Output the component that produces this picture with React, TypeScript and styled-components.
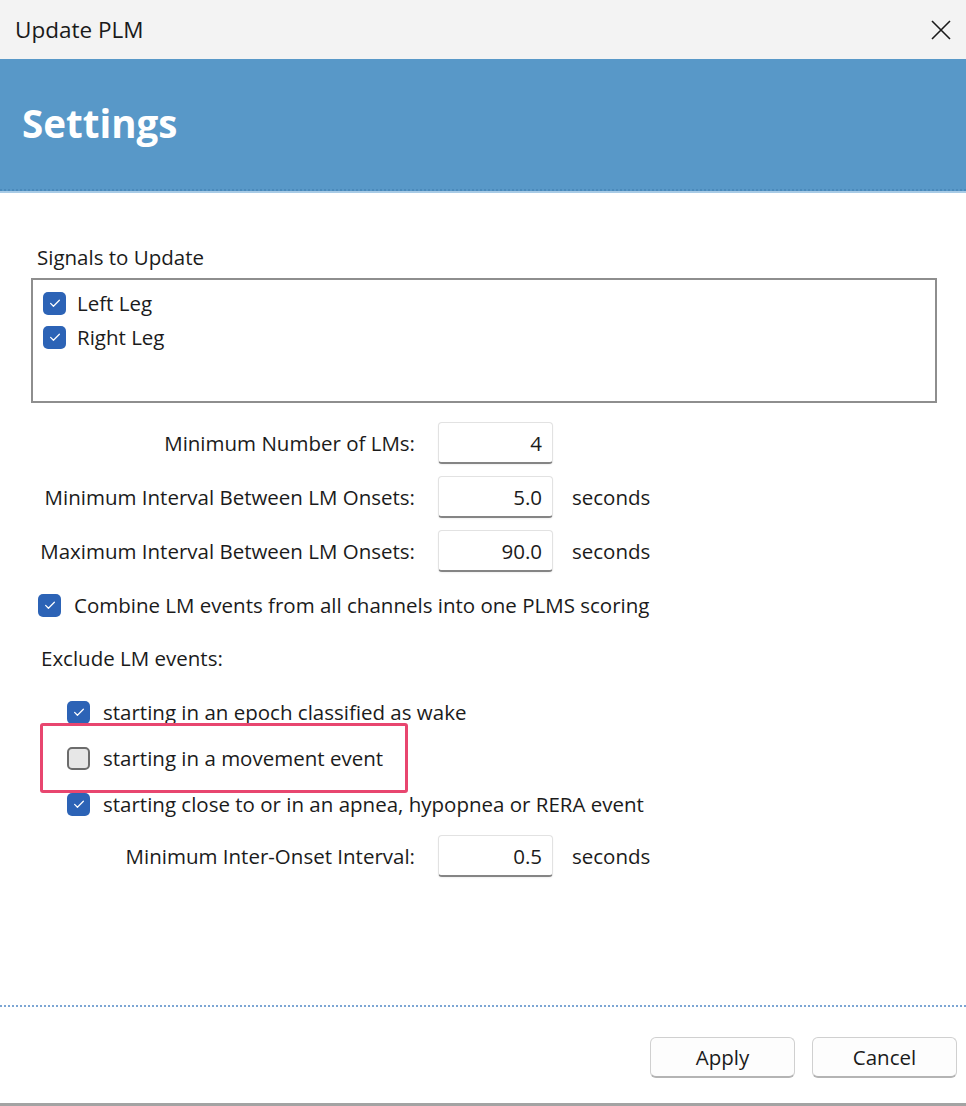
import React from "react";
import styled, { createGlobalStyle } from "styled-components";

const Global = createGlobalStyle`
  html, body { margin: 0; padding: 0; background: #ffffff; }
  body { font-family: "Open Sans", "Noto Sans", "Liberation Sans", sans-serif; color: #1b1b1b; }
  * { box-sizing: border-box; }
`;

const Window = styled.div`
  width: 966px;
  height: 1106px;
  display: flex;
  flex-direction: column;
  background: #ffffff;
  overflow: hidden;
`;

const TitleBar = styled.div`
  height: 59px;
  flex: none;
  background: #f3f3f3;
  display: flex;
  align-items: center;
  justify-content: space-between;
  padding: 0 9px 0 15px;
`;

const Title = styled.span`
  font-size: 22.5px;
  color: #1a1a1a;
`;

const CloseButton = styled.button`
  width: 32px;
  height: 32px;
  border: none;
  background: transparent;
  padding: 0;
  display: flex;
  align-items: center;
  justify-content: center;
`;

const Banner = styled.div`
  height: 132px;
  flex: none;
  background: #5898c8;
  display: flex;
  align-items: center;
  padding-left: 22px;
  padding-bottom: 2px;
  border-bottom: 2px dotted #4b8abb;
  box-shadow: 0 2px 0 #a8cbe6;
`;

const BannerTitle = styled.h1`
  margin: 0;
  font-size: 38.5px;
  font-weight: 700;
  color: #ffffff;
`;

const Body = styled.div`
  flex: 1;
  display: flex;
  flex-direction: column;
`;

const SectionLabel = styled.div<{ $top: number; $left: number }>`
  margin-top: ${(p) => p.$top}px;
  margin-left: ${(p) => p.$left}px;
  font-size: 20.5px;
  line-height: 24px;
`;

const ListBox = styled.div`
  margin: 9px 0 0 31px;
  width: 906px;
  height: 125px;
  border: 2px solid #8e8e8e;
  padding: 6px 0 0 10px;
  display: flex;
  flex-direction: column;
`;

const CheckRow = styled.label<{ $top?: number; $left: number; $gap?: number }>`
  position: relative;
  width: max-content;
  height: 34px;
  margin-top: ${(p) => p.$top ?? 0}px;
  margin-left: ${(p) => p.$left}px;
  display: flex;
  align-items: center;
  gap: ${(p) => p.$gap ?? 11}px;
  font-size: 20.5px;
  white-space: nowrap;
`;

const Box = styled.span<{ $checked: boolean }>`
  width: 23px;
  height: 23px;
  flex: none;
  border-radius: 5px;
  display: flex;
  align-items: center;
  justify-content: center;
  background: ${(p) => (p.$checked ? "#2c63b6" : "#e7e7e7")};
  border: ${(p) => (p.$checked ? "none" : "2px solid #6c6c6c")};
`;

const Highlight = styled.span`
  position: absolute;
  left: -27px;
  right: -25px;
  top: -18px;
  bottom: -18px;
  border: 3px solid #e8466f;
  border-radius: 3px;
  pointer-events: none;
`;

const FieldRow = styled.div<{ $top: number }>`
  margin-top: ${(p) => p.$top}px;
  display: grid;
  grid-template-columns: 438px 115px auto;
  align-items: center;
  height: 42px;
`;

const FieldLabel = styled.span`
  text-align: right;
  padding-right: 23px;
  font-size: 20.5px;
  white-space: nowrap;
`;

const NumberInput = styled.div`
  height: 42px;
  border: 1px solid #e2e2e2;
  border-bottom: 2px solid #858585;
  border-radius: 4px;
  background: #ffffff;
  display: flex;
  align-items: center;
  justify-content: flex-end;
  padding-right: 10px;
  font-size: 20.5px;
  box-shadow: 0 1px 2px rgba(0, 0, 0, 0.06);
`;

const Unit = styled.span`
  margin-left: 19px;
  font-size: 20.5px;
`;

const Footer = styled.div`
  height: 101px;
  flex: none;
  border-top: 2px dotted #7ca6d4;
  border-bottom: 3px solid #a3a3a3;
  display: flex;
  justify-content: flex-end;
  align-items: flex-start;
  gap: 17px;
  padding: 30px 9px 0 0;
`;

const Button = styled.button`
  width: 145px;
  height: 41px;
  background: #fdfdfd;
  border: 1.5px solid #d0d0d0;
  border-bottom: 2px solid #b4b4b4;
  border-radius: 6px;
  font-family: inherit;
  font-size: 20.5px;
  color: #1b1b1b;
`;

const Check = () => (
  <svg width="14" height="14" viewBox="0 0 16 16" fill="none">
    <path d="M3 8.5l3.2 3.2L13 4.8" stroke="#ffffff" strokeWidth="1.4" strokeLinecap="round" strokeLinejoin="round" />
  </svg>
);

const CheckBox = ({ checked }: { checked: boolean }) => (
  <Box $checked={checked}>{checked && <Check />}</Box>
);

const fields = [
  { label: "Minimum Number of LMs:", value: "4", unit: "", top: 19 },
  { label: "Minimum Interval Between LM Onsets:", value: "5.0", unit: "seconds", top: 12 },
  { label: "Maximum Interval Between LM Onsets:", value: "90.0", unit: "seconds", top: 12 },
];

export default function App() {
  return (
    <>
      <Global />
      <Window>
        <TitleBar>
          <Title>Update PLM</Title>
          <CloseButton aria-label="Close">
            <svg width="22" height="22" viewBox="0 0 22 22">
              <path d="M2 2L20 20M20 2L2 20" stroke="#1a1a1a" strokeWidth="1.6" />
            </svg>
          </CloseButton>
        </TitleBar>
        <Banner>
          <BannerTitle>Settings</BannerTitle>
        </Banner>
        <Body>
          <SectionLabel $top={54} $left={37}>Signals to Update</SectionLabel>
          <ListBox>
            <CheckRow $left={0}>
              <CheckBox checked />
              Left Leg
            </CheckRow>
            <CheckRow $left={0}>
              <CheckBox checked />
              Right Leg
            </CheckRow>
          </ListBox>
          {fields.map((f) => (
            <FieldRow key={f.label} $top={f.top}>
              <FieldLabel>{f.label}</FieldLabel>
              <NumberInput>{f.value}</NumberInput>
              {f.unit && <Unit>{f.unit}</Unit>}
            </FieldRow>
          ))}
          <CheckRow $top={16} $left={38} $gap={13}>
            <CheckBox checked />
            Combine LM events from all channels into one PLMS scoring
          </CheckRow>
          <SectionLabel $top={24} $left={41}>Exclude LM events:</SectionLabel>
          <CheckRow $top={25} $left={67} $gap={13}>
            <CheckBox checked />
            starting in an epoch classified as wake
          </CheckRow>
          <CheckRow $top={12} $left={67} $gap={13}>
            <CheckBox checked={false} />
            starting in a movement event
            <Highlight />
          </CheckRow>
          <CheckRow $top={12} $left={67} $gap={13}>
            <CheckBox checked />
            starting close to or in an apnea, hypopnea or RERA event
          </CheckRow>
          <FieldRow $top={14}>
            <FieldLabel>Minimum Inter-Onset Interval:</FieldLabel>
            <NumberInput>0.5</NumberInput>
            <Unit>seconds</Unit>
          </FieldRow>
        </Body>
        <Footer>
          <Button>Apply</Button>
          <Button>Cancel</Button>
        </Footer>
      </Window>
    </>
  );
}
